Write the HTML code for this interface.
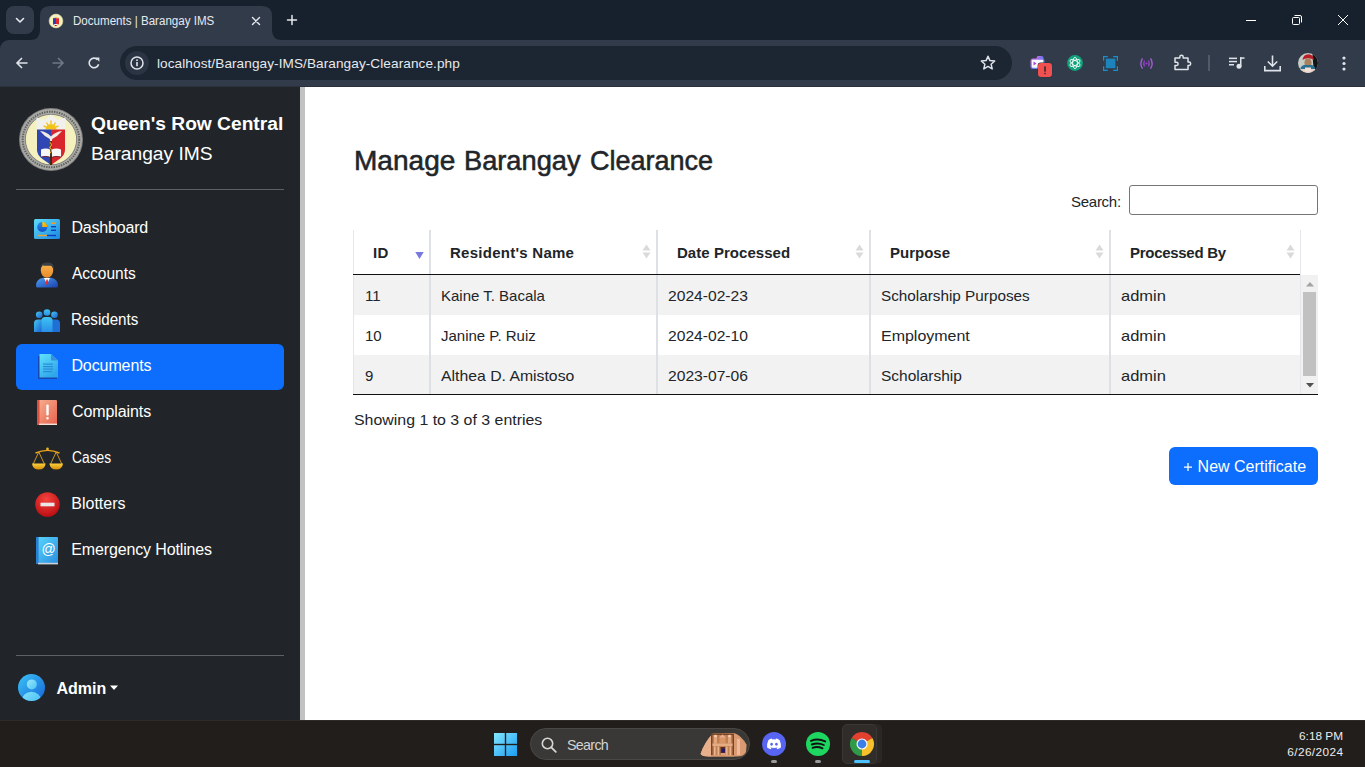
<!DOCTYPE html>
<html><head><meta charset="utf-8"><style>
*{box-sizing:border-box;margin:0;padding:0}
html,body{width:1365px;height:767px;overflow:hidden;background:#fff;font-family:"Liberation Sans",sans-serif}
body{position:relative}
.a{position:absolute}
.t{position:absolute;line-height:1;white-space:nowrap}
svg{position:absolute;overflow:visible}
</style></head><body>
<div class="a" style="left:0;top:0;width:1365px;height:52px;background:#17212e"></div>
<div class="a" style="left:6px;top:6px;width:28px;height:28px;border-radius:8px;background:#323b4a"></div>
<svg style="left:14px;top:14px" width="12" height="12" viewBox="0 0 12 12"><path d="M2.5 4.5 L6 8 L9.5 4.5" fill="none" stroke="#e6e9ee" stroke-width="1.6" stroke-linecap="round" stroke-linejoin="round"/></svg>
<svg style="left:30px;top:6px" width="252" height="34" viewBox="0 0 252 34"><path d="M0 34 Q10 34 10 24 L10 10 Q10 0 20 0 L232 0 Q242 0 242 10 L242 24 Q242 34 252 34 Z" fill="#323b4a"/></svg>
<svg style="left:49px;top:13.5px" width="14" height="14" viewBox="0 0 14 14"><circle cx="7" cy="7" r="6.9" fill="#f7f3bd"/><circle cx="7" cy="7" r="6.9" fill="none" stroke="#d8d4a0" stroke-width="0.6"/><rect x="4.3" y="2.3" width="5.4" height="1.8" fill="#e8e8e0"/><rect x="5.8" y="3.2" width="2.4" height="1" fill="#f0c020"/><path d="M4 4.2 L10 4.2 L10 10 L7 12.3 L4 10 Z" fill="#de2a2a"/><path d="M4 4.2 L7 4.2 L7 12.3 L4 10 Z" fill="#2a40b8"/><path d="M5.2 10 L8.8 10 L8.8 11 L5.2 11 Z" fill="#f4f4f4"/></svg>
<div class="t" style="left:72.5px;top:15.19px;font-size:12.3px;font-weight:normal;color:#e6e9ee;transform:scaleX(0.941);transform-origin:0 0;">Documents | Barangay IMS</div>
<svg style="left:252px;top:16.5px" width="8" height="8" viewBox="0 0 8 8"><path d="M0.5 0.5 L7.5 7.5 M7.5 0.5 L0.5 7.5" stroke="#e6e9ee" stroke-width="1.4" stroke-linecap="round"/></svg>
<svg style="left:287px;top:15px" width="10" height="10" viewBox="0 0 10 10"><path d="M5 0.5 V9.5 M0.5 5 H9.5" stroke="#e6e9ee" stroke-width="1.5" stroke-linecap="round"/></svg>
<div class="a" style="left:1246px;top:20px;width:10px;height:1px;background:#fff"></div>
<svg style="left:1292px;top:15px" width="10" height="10" viewBox="0 0 10 10"><rect x="0.5" y="2.5" width="7" height="7" rx="1" fill="none" stroke="#fff" stroke-width="1"/><path d="M2.5 0.5 H8 Q9.5 0.5 9.5 2 V7.5" fill="none" stroke="#fff" stroke-width="1"/></svg>
<svg style="left:1338px;top:15px" width="10" height="10" viewBox="0 0 10 10"><path d="M0 0 L10 10 M10 0 L0 10" stroke="#fff" stroke-width="1"/></svg>
<div class="a" style="left:0;top:40px;width:1365px;height:47px;background:#323b4a;border-top-left-radius:9px"></div>
<div class="a" style="left:0;top:86px;width:1365px;height:1px;background:#2a313d"></div>
<svg style="left:16px;top:57px" width="12" height="12" viewBox="0 0 12 12"><path d="M11.5 6 H1 M6 1 L1 6 L6 11" fill="none" stroke="#dfe3ea" stroke-width="1.6"/></svg>
<svg style="left:52px;top:57px" width="12" height="12" viewBox="0 0 12 12"><path d="M0.5 6 H11 M6 1 L11 6 L6 11" fill="none" stroke="#6f7886" stroke-width="1.6"/></svg>
<svg style="left:88px;top:57px" width="12" height="12" viewBox="0 0 12 12"><path d="M10.6 7.2 A4.8 4.8 0 1 1 9.4 2.6" fill="none" stroke="#dfe3ea" stroke-width="1.6"/><path d="M7.2 0.6 L11.4 0.6 L11.4 4.8 Z" fill="#dfe3ea"/></svg>
<div class="a" style="left:120px;top:46px;width:892px;height:34px;border-radius:17px;background:#1c2532"></div>
<div class="a" style="left:125px;top:51px;width:24px;height:24px;border-radius:12px;background:#2b3442"></div>
<svg style="left:130px;top:56px" width="14" height="14" viewBox="0 0 14 14"><circle cx="7" cy="7" r="6" fill="none" stroke="#dfe3ea" stroke-width="1.5"/><rect x="6.2" y="6" width="1.6" height="4.2" fill="#dfe3ea"/><rect x="6.2" y="3.4" width="1.6" height="1.6" fill="#dfe3ea"/></svg>
<div class="t" style="left:157px;top:56.89px;font-size:13.6px;font-weight:normal;color:#e6e9ee;letter-spacing:0.08px;">localhost/Barangay-IMS/Barangay-Clearance.php</div>
<svg style="left:980px;top:55px" width="16" height="16" viewBox="0 0 16 16"><path d="M8 1.2 L9.9 5.6 L14.7 6 L11.1 9.2 L12.2 13.9 L8 11.4 L3.8 13.9 L4.9 9.2 L1.3 6 L6.1 5.6 Z" fill="none" stroke="#dfe3ea" stroke-width="1.5" stroke-linejoin="round"/></svg>
<!-- ext1 screen recorder -->
<svg style="left:1030px;top:55px" width="23" height="23" viewBox="0 0 23 23">
<defs><linearGradient id="gE1" x1="0" y1="0" x2="1" y2="1"><stop offset="0" stop-color="#e070e0"/><stop offset="0.5" stop-color="#7a70f0"/><stop offset="1" stop-color="#30c0f0"/></linearGradient></defs>
<rect x="6.5" y="1" width="7" height="4.5" rx="2" fill="url(#gE1)"/>
<rect x="0.5" y="3.5" width="14" height="10.5" rx="2.5" fill="url(#gE1)"/>
<rect x="1.8" y="4.8" width="11.4" height="8" rx="1" fill="#f8f8ff"/>
<path d="M3.5 6.5 L6.5 8.5 L3.5 10.5 Z" fill="#b040e0"/>
<rect x="7.6" y="7.6" width="14.8" height="14.8" rx="3.2" fill="#2a3342"/>
<rect x="8" y="8" width="14" height="14" rx="3" fill="#f05050"/>
<rect x="14.3" y="11.3" width="1.4" height="5.4" rx="0.4" fill="#222"/>
<rect x="14.3" y="17.8" width="1.4" height="1.4" rx="0.4" fill="#222"/>
</svg>
<!-- chatgpt -->
<svg style="left:1066.5px;top:55px" width="16" height="16" viewBox="0 0 16 16">
<circle cx="8" cy="8" r="7.9" fill="#12a37c"/>
<g fill="none" stroke="#fff" stroke-width="0.85">
<ellipse cx="8" cy="8" rx="2.4" ry="5.6"/>
<ellipse cx="8" cy="8" rx="2.4" ry="5.6" transform="rotate(60 8 8)"/>
<ellipse cx="8" cy="8" rx="2.4" ry="5.6" transform="rotate(120 8 8)"/>
</g>
</svg>
<!-- blue capture -->
<svg style="left:1102.5px;top:55.5px" width="15" height="15" viewBox="0 0 15 15">
<path d="M0.6 4.8 V0.6 H4.8 M10.2 0.6 H14.4 V4.8 M14.4 10.2 V14.4 H10.2 M4.8 14.4 H0.6 V10.2" fill="none" stroke="#1a8fcf" stroke-width="1.2"/>
<rect x="2.8" y="2.6" width="9.6" height="9.6" fill="#1c84ba"/>
</svg>
<!-- purple broadcast -->
<svg style="left:1138.5px;top:57.5px" width="15" height="11" viewBox="0 0 15 11">
<path d="M3.2 0.8 Q0.6 5.5 3.2 10.2 M11.8 0.8 Q14.4 5.5 11.8 10.2" fill="none" stroke="#a35bd6" stroke-width="1.4" stroke-linecap="round"/>
<path d="M5.3 3 Q4.2 5.5 5.3 8 M9.7 3 Q10.8 5.5 9.7 8" fill="none" stroke="#9a3fd0" stroke-width="1.3" stroke-linecap="round"/>
<circle cx="7.5" cy="5.5" r="1" fill="#9a3fd0"/>
</svg>
<!-- puzzle -->
<svg style="left:1174px;top:54px" width="18" height="17" viewBox="0 0 18 17">
<path d="M1 4 H5.8 V3 A1.7 1.7 0 0 1 9.2 3 V4 H14 V8 H15 A1.7 1.7 0 0 1 15 11.4 H14 V15.6 H1 V11.5 H2.5 A1.6 1.6 0 0 0 2.5 8.3 H1 Z" fill="none" stroke="#dfe3ea" stroke-width="1.5" stroke-linejoin="round"/>
</svg>
<div class="a" style="left:1208px;top:55px;width:1.5px;height:16px;background:#505a69"></div>
<!-- media -->
<svg style="left:1228.5px;top:56.5px" width="16" height="12" viewBox="0 0 16 12">
<rect x="0" y="0.6" width="8" height="1.5" fill="#dfe3ea"/>
<rect x="0" y="3.8" width="8" height="1.5" fill="#dfe3ea"/>
<rect x="0" y="7" width="5" height="1.5" fill="#dfe3ea"/>
<rect x="11" y="0.3" width="1.5" height="9" fill="#dfe3ea"/>
<rect x="11" y="0.3" width="4.5" height="1.5" fill="#dfe3ea"/>
<circle cx="10" cy="9.3" r="2.5" fill="#dfe3ea"/>
</svg>
<!-- download -->
<svg style="left:1263.5px;top:54.5px" width="17" height="17" viewBox="0 0 17 17">
<path d="M8.5 0.5 V11 M3.8 6.5 L8.5 11.2 L13.2 6.5" fill="none" stroke="#dfe3ea" stroke-width="1.6"/>
<path d="M0.8 11 V15.6 H16.2 V11" fill="none" stroke="#dfe3ea" stroke-width="1.6"/>
</svg>
<!-- avatar -->
<svg style="left:1298px;top:53px" width="20" height="20" viewBox="0 0 20 20">
<defs><clipPath id="cPr"><circle cx="10" cy="10" r="10"/></clipPath></defs>
<g clip-path="url(#cPr)">
<rect width="20" height="20" fill="#c6cdc6"/>
<path d="M14.5 0 L20 0 L20 20 L13 20 Q16 14 15 9 Q14.5 4 14.5 0 Z" fill="#121416"/>
<path d="M4.5 7 Q5 1.5 10.5 1.2 Q15.5 1.5 16 7 Q13 5 10 5.2 Q6.5 5.4 4.5 7 Z" fill="#b81e28"/>
<ellipse cx="10" cy="9.8" rx="3.6" ry="4.3" fill="#a8825e"/>
<path d="M2.5 15 Q4 11.5 7 12 L13 12 Q16 11.5 17 14.5 L17 17 L2.5 17 Z" fill="#2a7090"/>
<path d="M2 16 L17 16 L17 20 L2 20 Z" fill="#e6d2c6"/>
<rect x="7" y="14.5" width="6" height="4" fill="#f0e0d8"/>
</g>
</svg>
<!-- menu dots -->
<svg style="left:1342px;top:55.5px" width="4" height="15" viewBox="0 0 4 15">
<circle cx="2" cy="2" r="1.6" fill="#dfe3ea"/><circle cx="2" cy="7.5" r="1.6" fill="#dfe3ea"/><circle cx="2" cy="13" r="1.6" fill="#dfe3ea"/>
</svg>
<div class="a" style="left:0;top:87px;width:300px;height:633px;background:#212529"></div>
<div class="a" style="left:300px;top:87px;width:5px;height:633px;background:#c2c2c2"></div>
<svg style="left:19px;top:107.5px" width="64" height="63" viewBox="0 0 64 63">
<ellipse cx="32" cy="31.5" rx="32" ry="31.5" fill="#808080"/>
<ellipse cx="32" cy="31.5" rx="31" ry="30.5" fill="#a9a9a6"/>
<ellipse cx="32" cy="31.5" rx="28.3" ry="27.8" fill="none" stroke="#60605a" stroke-width="2" stroke-dasharray="1.4 1.1"/>
<ellipse cx="32" cy="31.5" rx="26" ry="25.6" fill="#7a7a76"/>
<ellipse cx="32" cy="31.5" rx="25.2" ry="24.8" fill="#f5f1bf"/>
<path d="M17.5 9.5 L25.5 12 L32 6.5 L38.5 12 L46.5 9.5 L46.5 21.5 L17.5 21.5 Z" fill="#f0f0ec"/>
<path d="M26.5 21.5 A5.5 5.5 0 0 1 37.5 21.5 Z" fill="#f2c418"/>
<path d="M32 12.5 L32 16 M27.5 14.5 L29.2 17.3 M36.5 14.5 L34.8 17.3 M24.5 18 L27.5 19.2 M39.5 18 L36.5 19.2" stroke="#f2c418" stroke-width="1.4"/>
<path d="M18 21.5 L32 21.5 L32 57 L23.5 51 Q18 47 18 42 Z" fill="#3046b3"/>
<path d="M32 21.5 L46 21.5 L46 42 Q46 47 40.5 51 L32 57 Z" fill="#d9262c"/>
<path d="M21 23 Q27.5 23.5 32 28.5 Q36.5 23.5 43 23 Q39 28 33.2 31 L32 38 L30.8 31 Q25 28 21 23 Z" fill="#f2ece4"/>
<path d="M22 41.5 Q27 39.5 32 42 Q37 39.5 42 41.5 L42 49 Q37 47.5 32 49.5 Q27 47.5 22 49 Z" fill="#f7f7f7"/>
<path d="M22 49 Q27 47.5 32 49.5 Q37 47.5 42 49" fill="none" stroke="#6a2030" stroke-width="0.9"/>
<path d="M31.1 33 L32.9 33 L33 57 L31 57 Z" fill="#3a2a10"/>
<path d="M30.8 34.5 Q34 36.5 30.8 39.5 Q34 42 31.2 45" fill="none" stroke="#e8b020" stroke-width="1.2"/>
</svg>
<div class="t" style="left:91px;top:114.15px;font-size:19.2px;font-weight:bold;color:#fff;">Queen's Row Central</div>
<div class="t" style="left:91px;top:144.15px;font-size:19.2px;font-weight:normal;color:#fff;">Barangay IMS</div>
<div class="a" style="left:16px;top:189px;width:268px;height:1px;background:#5d6166"></div>
<div class="a" style="left:16px;top:344px;width:268px;height:46px;border-radius:6px;background:#0d6efd"></div>
<div class="t" style="left:71.4px;top:219.76px;font-size:16px;font-weight:normal;color:#fff;letter-spacing:-0.18px;">Dashboard</div>
<div class="t" style="left:72px;top:265.76px;font-size:16px;font-weight:normal;color:#fff;transform:scaleX(0.969);transform-origin:0 0;">Accounts</div>
<div class="t" style="left:71.4px;top:311.76px;font-size:16px;font-weight:normal;color:#fff;transform:scaleX(0.946);transform-origin:0 0;">Residents</div>
<div class="t" style="left:71.4px;top:357.76px;font-size:16px;font-weight:normal;color:#fff;letter-spacing:-0.09px;">Documents</div>
<div class="t" style="left:72px;top:403.76px;font-size:16px;font-weight:normal;color:#fff;letter-spacing:-0.1px;">Complaints</div>
<div class="t" style="left:72px;top:449.76px;font-size:16px;font-weight:normal;color:#fff;transform:scaleX(0.862);transform-origin:0 0;">Cases</div>
<div class="t" style="left:71.3px;top:495.76px;font-size:16px;font-weight:normal;color:#fff;">Blotters</div>
<div class="t" style="left:71.3px;top:541.76px;font-size:16px;font-weight:normal;color:#fff;letter-spacing:-0.14px;">Emergency Hotlines</div>
<svg style="left:0;top:0" width="1" height="1"><defs>
<linearGradient id="gCard" x1="0" y1="0" x2="1" y2="1"><stop offset="0" stop-color="#5fdcf8"/><stop offset="1" stop-color="#1a86e0"/></linearGradient>
<linearGradient id="gPie" x1="0" y1="0" x2="0" y2="1"><stop offset="0" stop-color="#2a8fe8"/><stop offset="1" stop-color="#1150c8"/></linearGradient>
<linearGradient id="gYel" x1="0" y1="0" x2="1" y2="1"><stop offset="0" stop-color="#ffd400"/><stop offset="1" stop-color="#f59a00"/></linearGradient>
<linearGradient id="gPpl" x1="0" y1="0" x2="1" y2="1"><stop offset="0" stop-color="#45c8f5"/><stop offset="1" stop-color="#1a5fcc"/></linearGradient>
<linearGradient id="gPpl2" x1="0" y1="0" x2="0" y2="1"><stop offset="0" stop-color="#3ec3f3"/><stop offset="1" stop-color="#2a8ee6"/></linearGradient>
<linearGradient id="gDoc" x1="0" y1="0" x2="0.6" y2="1"><stop offset="0" stop-color="#62e2fb"/><stop offset="1" stop-color="#2ea6ea"/></linearGradient>
<linearGradient id="gBook" x1="0" y1="0" x2="1" y2="1"><stop offset="0" stop-color="#f7b08f"/><stop offset="1" stop-color="#e8614e"/></linearGradient>
<linearGradient id="gGold" x1="0" y1="0" x2="0" y2="1"><stop offset="0" stop-color="#fcd23a"/><stop offset="1" stop-color="#d58a0a"/></linearGradient>
<radialGradient id="gRed" cx="0.45" cy="0.3" r="0.75"><stop offset="0" stop-color="#f4443e"/><stop offset="1" stop-color="#b80a10"/></radialGradient>
<linearGradient id="gBlueBook" x1="0" y1="0" x2="1" y2="1"><stop offset="0" stop-color="#5ad6fb"/><stop offset="1" stop-color="#2a8ee0"/></linearGradient>
<linearGradient id="gFace" x1="0" y1="0" x2="0" y2="1"><stop offset="0" stop-color="#f9b650"/><stop offset="1" stop-color="#e98a2a"/></linearGradient>
<linearGradient id="gSuit" x1="0" y1="0" x2="1" y2="1"><stop offset="0" stop-color="#4aa0f0"/><stop offset="1" stop-color="#1b3fae"/></linearGradient>
<linearGradient id="gAv" x1="0" y1="0" x2="1" y2="1"><stop offset="0" stop-color="#3cc4f7"/><stop offset="1" stop-color="#1565d8"/></linearGradient>
</defs></svg>
<!-- Dashboard -->
<svg style="left:34px;top:219px" width="26" height="20" viewBox="0 0 26 20">
<rect x="0" y="0" width="26" height="20" rx="1.5" fill="url(#gCard)"/>
<circle cx="8.3" cy="8" r="5.1" fill="url(#gPie)"/>
<path d="M8.3 8 V2.9 A5.1 5.1 0 0 1 13.4 8 Z" fill="url(#gYel)"/>
<rect x="17" y="3.4" width="5" height="1.6" fill="#f09a20"/>
<rect x="17" y="7" width="5" height="1.4" fill="#0b3cc4"/>
<rect x="17" y="10.6" width="5" height="1.4" fill="#0b3cc4"/>
<rect x="4" y="15.8" width="9" height="1.4" fill="#f0a030"/>
<rect x="13" y="15.8" width="9" height="1.4" fill="#0b3cc4"/>
</svg>
<!-- Accounts -->
<svg style="left:36px;top:262px" width="22" height="26" viewBox="0 0 22 26">
<path d="M0 24 Q0 17 7 15.8 L15 15.8 Q22 17 22 24 Q22 25.5 20 25.5 L2 25.5 Q0 25.5 0 24 Z" fill="url(#gSuit)"/>
<path d="M8 16 L11 22 L14 16 Z" fill="#fff"/>
<path d="M10.3 17.5 L11.7 17.5 L12.2 21.5 L11 23 L9.8 21.5 Z" fill="#e52b2b"/>
<ellipse cx="11" cy="8.5" rx="6.2" ry="7.3" fill="url(#gFace)"/>
<path d="M4.6 7 Q4 1.5 9 0.8 Q14 0 16.5 2 Q18.2 3.6 17.3 7.5 Q16.8 4 14 3.8 Q9 4 6.3 3.6 Q5 4.2 4.6 7 Z" fill="#3a4048"/>
</svg>
<!-- Residents -->
<svg style="left:34px;top:309px" width="26" height="23" viewBox="0 0 26 23">
<circle cx="5.2" cy="5.8" r="3.3" fill="url(#gPpl)"/>
<circle cx="20.5" cy="5.8" r="3.3" fill="url(#gPpl)"/>
<path d="M0 14.5 Q0 10.5 4 10.5 L8 10.5 L8 23 L0 23 Z" fill="url(#gPpl)"/>
<path d="M18 10.5 L22 10.5 Q26 10.5 26 14.5 L26 23 L18 23 Z" fill="#1e6fd6"/>
<circle cx="13" cy="3.5" r="3.3" fill="url(#gPpl2)"/>
<path d="M7.5 11.5 Q7.5 8 11 8 L15 8 Q18.5 8 18.5 11.5 L18.5 23 L7.5 23 Z" fill="url(#gPpl2)"/>
</svg>
<!-- Documents -->
<svg style="left:37px;top:354px" width="22" height="26" viewBox="0 0 22 26">
<path d="M1 2 L13 2 L20 8.5 L20 25 L1 25 Z" fill="#1a46b0"/>
<path d="M2.5 0 L14 0 L21 6.5 L21 23.5 L2.5 23.5 Z" fill="url(#gDoc)"/>
<path d="M14 0 L14 6.5 L21 6.5 Z" fill="#3a8ee0"/>
<rect x="6" y="9.5" width="10" height="1.2" fill="#2b8ad8"/>
<rect x="6" y="12" width="10" height="1.2" fill="#2b8ad8"/>
<rect x="6" y="14.5" width="10" height="1.2" fill="#2b8ad8"/>
<rect x="6" y="17" width="9" height="1.2" fill="#2b8ad8"/>
</svg>
<!-- Complaints -->
<svg style="left:37px;top:400px" width="20" height="26" viewBox="0 0 20 26">
<rect x="0" y="0" width="20" height="25" rx="1" fill="url(#gBook)"/>
<rect x="0" y="0" width="2.5" height="25" fill="#d9503e"/>
<rect x="2" y="23.6" width="18" height="1.4" fill="#f2e2d6"/>
<rect x="9.3" y="4.5" width="2.4" height="11" rx="1" fill="#fff"/>
<rect x="9.3" y="17" width="2.4" height="2.4" rx="1" fill="#fff"/>
</svg>
<!-- Cases -->
<svg style="left:31.5px;top:447px" width="31" height="24" viewBox="0 0 31 24">
<path d="M3.5 6 Q15.5 0.8 27.5 6" fill="none" stroke="#e8a21a" stroke-width="1.4"/>
<circle cx="15.5" cy="2" r="1.4" fill="#f0b020"/>
<path d="M6.8 5 L1.2 17 M6.8 5 L12.4 17 M24.2 5 L18.6 17 M24.2 5 L29.8 17" fill="none" stroke="#e0a020" stroke-width="0.9"/>
<path d="M0 16.5 L13.6 16.5 Q13 22.5 6.8 22.5 Q0.6 22.5 0 16.5 Z M17.4 16.5 L31 16.5 Q30.4 22.5 24.2 22.5 Q18 22.5 17.4 16.5 Z" fill="url(#gGold)"/>
</svg>
<!-- Blotters -->
<svg style="left:34.5px;top:492px" width="25" height="25" viewBox="0 0 25 25">
<circle cx="12.5" cy="12.5" r="12.3" fill="url(#gRed)"/>
<rect x="5.5" y="10.7" width="14" height="3.6" fill="#e8e8e8"/>
</svg>
<!-- Emergency -->
<svg style="left:36px;top:537px" width="22" height="28" viewBox="0 0 22 28">
<rect x="0" y="0" width="22" height="27" rx="1" fill="url(#gBlueBook)"/>
<rect x="0" y="0" width="2.6" height="27" fill="#2a7fd0"/>
<rect x="2" y="25.8" width="20" height="1.6" fill="#c9d2da"/>
<text x="12.5" y="17" font-family="Liberation Sans" font-size="14" fill="#fff" text-anchor="middle">@</text>
</svg>
<div class="a" style="left:16px;top:655px;width:268px;height:1px;background:#5d6166"></div>
<svg style="left:18px;top:674px" width="27" height="27" viewBox="0 0 27 27">
<defs><clipPath id="cAv"><circle cx="13.5" cy="13.5" r="13.5"/></clipPath>
<linearGradient id="gAvH" x1="0" y1="0" x2="1" y2="1"><stop offset="0" stop-color="#9ce8fc"/><stop offset="1" stop-color="#4cc4f4"/></linearGradient>
<linearGradient id="gAvB" x1="0" y1="0" x2="1" y2="1"><stop offset="0" stop-color="#86e2fb"/><stop offset="1" stop-color="#36b4f2"/></linearGradient></defs>
<circle cx="13.5" cy="13.5" r="13.5" fill="url(#gAv)"/>
<g clip-path="url(#cAv)"><circle cx="13.8" cy="10.4" r="5" fill="url(#gAvH)"/><ellipse cx="13.5" cy="26.5" rx="9.6" ry="8.8" fill="url(#gAvB)"/></g>
</svg>
<div class="t" style="left:56.5px;top:680.76px;font-size:16px;font-weight:bold;color:#fff;">Admin</div>
<svg style="left:110px;top:685px" width="8" height="6" viewBox="0 0 8 6"><path d="M0 0.5 H8 L4 5 Z" fill="#fff"/></svg>
<div class="t" style="left:353.5px;top:147.02px;font-size:27.5px;font-weight:normal;color:#212529;transform:scaleX(1.02);transform-origin:0 0;-webkit-text-stroke:0.55px #212529">Manage</div>
<div class="t" style="left:464.3px;top:147.02px;font-size:27.5px;font-weight:normal;color:#212529;transform:scaleX(0.99);transform-origin:0 0;-webkit-text-stroke:0.55px #212529">Barangay</div>
<div class="t" style="left:590.2px;top:147.02px;font-size:27.5px;font-weight:normal;color:#212529;transform:scaleX(0.982);transform-origin:0 0;-webkit-text-stroke:0.55px #212529">Clearance</div>
<div class="t" style="left:1071px;top:193.60px;font-size:15px;font-weight:normal;color:#212529;letter-spacing:-0.27px;">Search:</div>
<div class="a" style="left:1129px;top:185px;width:189px;height:30px;border:1px solid #767676;border-radius:3px"></div>
<div class="a" style="left:353px;top:275px;width:947px;height:40px;background:#f2f2f2"></div>
<div class="a" style="left:353px;top:355px;width:947px;height:39px;background:#f2f2f2"></div>
<div class="a" style="left:353px;top:230px;width:1px;height:164px;background:#e3e6ea"></div>
<div class="a" style="left:429px;top:230px;width:2px;height:164px;background:#dde1e6"></div>
<div class="a" style="left:656px;top:230px;width:2px;height:164px;background:#dde1e6"></div>
<div class="a" style="left:869px;top:230px;width:2px;height:164px;background:#dde1e6"></div>
<div class="a" style="left:1109px;top:230px;width:2px;height:164px;background:#dde1e6"></div>
<div class="a" style="left:1300px;top:230px;width:1px;height:164px;background:#e3e6ea"></div>
<div class="a" style="left:353px;top:274px;width:947px;height:1px;background:#111"></div>
<div class="a" style="left:1301px;top:275px;width:17px;height:119px;background:#f1f1f1"></div>
<div class="a" style="left:1303px;top:292px;width:13px;height:84px;background:#c1c1c1"></div>
<svg style="left:1305.5px;top:282px" width="8" height="4.5" viewBox="0 0 8 4.5"><path d="M0 4.5 L4 0 L8 4.5 Z" fill="#a3a3a3"/></svg>
<svg style="left:1305.5px;top:382.5px" width="8" height="4.5" viewBox="0 0 8 4.5"><path d="M0 0 L8 0 L4 4.5 Z" fill="#505050"/></svg>
<div class="a" style="left:353px;top:394px;width:965px;height:1px;background:#111"></div>
<div class="t" style="left:373px;top:245.30px;font-size:15px;font-weight:bold;color:#212529;letter-spacing:0.3px;">ID</div>
<div class="t" style="left:450px;top:245.30px;font-size:15px;font-weight:bold;color:#212529;letter-spacing:0.26px;">Resident's Name</div>
<div class="t" style="left:677px;top:245.30px;font-size:15px;font-weight:bold;color:#212529;letter-spacing:0.04px;">Date Processed</div>
<div class="t" style="left:890px;top:245.30px;font-size:15px;font-weight:bold;color:#212529;">Purpose</div>
<div class="t" style="left:1130px;top:245.30px;font-size:15px;font-weight:bold;color:#212529;letter-spacing:-0.29px;">Processed By</div>
<svg style="left:415px;top:252px" width="9" height="7" viewBox="0 0 9 7"><path d="M0.3 0 L8.7 0 L4.5 7 Z" fill="#7779de"/></svg>
<svg style="left:642px;top:244px" width="9" height="15" viewBox="0 0 9 15"><path d="M0.5 6.5 L4.5 0.5 L8.5 6.5 Z M0.5 8.5 L8.5 8.5 L4.5 14.5 Z" fill="#dadada"/></svg>
<svg style="left:855px;top:244px" width="9" height="15" viewBox="0 0 9 15"><path d="M0.5 6.5 L4.5 0.5 L8.5 6.5 Z M0.5 8.5 L8.5 8.5 L4.5 14.5 Z" fill="#dadada"/></svg>
<svg style="left:1095px;top:244px" width="9" height="15" viewBox="0 0 9 15"><path d="M0.5 6.5 L4.5 0.5 L8.5 6.5 Z M0.5 8.5 L8.5 8.5 L4.5 14.5 Z" fill="#dadada"/></svg>
<svg style="left:1286px;top:244px" width="9" height="15" viewBox="0 0 9 15"><path d="M0.5 6.5 L4.5 0.5 L8.5 6.5 Z M0.5 8.5 L8.5 8.5 L4.5 14.5 Z" fill="#dadada"/></svg>
<div class="t" style="left:365px;top:287.80px;font-size:15px;font-weight:normal;color:#212529;">11</div>
<div class="t" style="left:441px;top:287.80px;font-size:15px;font-weight:normal;color:#212529;">Kaine T. Bacala</div>
<div class="t" style="left:668px;top:287.80px;font-size:15px;font-weight:normal;color:#212529;transform:scaleX(1.042);transform-origin:0 0;">2024-02-23</div>
<div class="t" style="left:881px;top:287.80px;font-size:15px;font-weight:normal;color:#212529;transform:scaleX(1.019);transform-origin:0 0;">Scholarship Purposes</div>
<div class="t" style="left:1121px;top:287.80px;font-size:15px;font-weight:normal;color:#212529;transform:scaleX(1.1);transform-origin:0 0;">admin</div>
<div class="t" style="left:365px;top:328.30px;font-size:15px;font-weight:normal;color:#212529;">10</div>
<div class="t" style="left:441px;top:328.30px;font-size:15px;font-weight:normal;color:#212529;">Janine P. Ruiz</div>
<div class="t" style="left:668px;top:328.30px;font-size:15px;font-weight:normal;color:#212529;transform:scaleX(1.042);transform-origin:0 0;">2024-02-10</div>
<div class="t" style="left:881px;top:328.30px;font-size:15px;font-weight:normal;color:#212529;transform:scaleX(1.065);transform-origin:0 0;">Employment</div>
<div class="t" style="left:1121px;top:328.30px;font-size:15px;font-weight:normal;color:#212529;transform:scaleX(1.1);transform-origin:0 0;">admin</div>
<div class="t" style="left:365px;top:367.80px;font-size:15px;font-weight:normal;color:#212529;">9</div>
<div class="t" style="left:441px;top:367.80px;font-size:15px;font-weight:normal;color:#212529;transform:scaleX(1.052);transform-origin:0 0;">Althea D. Amistoso</div>
<div class="t" style="left:668px;top:367.80px;font-size:15px;font-weight:normal;color:#212529;transform:scaleX(1.042);transform-origin:0 0;">2023-07-06</div>
<div class="t" style="left:881px;top:367.80px;font-size:15px;font-weight:normal;color:#212529;transform:scaleX(1.032);transform-origin:0 0;">Scholarship</div>
<div class="t" style="left:1121px;top:367.80px;font-size:15px;font-weight:normal;color:#212529;transform:scaleX(1.1);transform-origin:0 0;">admin</div>
<div class="t" style="left:353.5px;top:412.10px;font-size:15px;font-weight:normal;color:#212529;transform:scaleX(1.06);transform-origin:0 0;">Showing 1 to 3 of 3 entries</div>
<div class="a" style="left:1169px;top:447px;width:149px;height:38px;border-radius:6px;background:#0d6efd"></div>
<svg style="left:1183.7px;top:463px" width="8" height="8" viewBox="0 0 8 8"><path d="M4 0 V8 M0 4 H8" stroke="#fff" stroke-width="1.25"/></svg>
<div class="t" style="left:1197.6px;top:458.76px;font-size:16px;font-weight:normal;color:#fff;">New Certificate</div>
<div class="a" style="left:0;top:720px;width:1365px;height:47px;background:#221e1c;border-top:1px solid #2f2b29"></div>
<!-- windows logo -->
<svg style="left:494px;top:733px" width="23" height="23" viewBox="0 0 23 23">
<defs><linearGradient id="gWin" gradientUnits="userSpaceOnUse" x1="0" y1="0" x2="23" y2="23"><stop offset="0" stop-color="#84e8fe"/><stop offset="1" stop-color="#1a9cf2"/></linearGradient></defs>
<rect x="0" y="0" width="10.8" height="10.8" fill="url(#gWin)"/>
<rect x="12.2" y="0" width="10.8" height="10.8" fill="url(#gWin)"/>
<rect x="0" y="12.2" width="10.8" height="10.8" fill="url(#gWin)"/>
<rect x="12.2" y="12.2" width="10.8" height="10.8" fill="url(#gWin)"/>
</svg>
<!-- search pill -->
<div class="a" style="left:530px;top:728px;width:220px;height:32px;border-radius:16px;background:#3a3837;border:1px solid #4a4745"></div>
<svg style="left:541px;top:737px" width="16" height="16" viewBox="0 0 16 16">
<circle cx="6.5" cy="6.5" r="5.2" fill="none" stroke="#d6d6d6" stroke-width="1.6"/>
<path d="M10.3 10.3 L14.8 14.8" stroke="#d6d6d6" stroke-width="1.8" stroke-linecap="round"/>
</svg>
<!-- petra -->
<svg style="left:700px;top:731px" width="47" height="27" viewBox="0 0 47 27">
<path d="M0.6 23 Q4 12 12.8 2.5 L34 2 Q42 5 46.6 13.8 L46 21 Q44 25.5 37 25.5 L9 25.5 Q2 25.5 0.6 23 Z" fill="#d99a70"/>
<path d="M0.6 23 Q4 12 12.8 2.5 L12 25.5 L9 25.5 Q2 25.5 0.6 23 Z" fill="#e8b08a"/>
<rect x="37" y="8" width="3" height="16" fill="#f0b8a0"/>
<rect x="11" y="2.5" width="23" height="23" fill="#7a4424"/>
<rect x="12.5" y="4" width="20" height="21" fill="#c07e52"/>
<rect x="14" y="4.5" width="3" height="8" fill="#e2a67c"/>
<rect x="28" y="4.5" width="3" height="8" fill="#e2a67c"/>
<circle cx="15.5" cy="5" r="1.3" fill="#f4d2bc"/>
<circle cx="29.5" cy="5" r="1.3" fill="#f4d2bc"/>
<rect x="19.5" y="6" width="6" height="6.5" fill="#d89668"/>
<path d="M19 6.5 L22.5 3.5 L26 6.5 Z" fill="#e8b090"/>
<rect x="12.5" y="12.5" width="20" height="2.6" fill="#e6ac84"/>
<rect x="14" y="15.5" width="1.6" height="9" fill="#eab48e"/>
<rect x="17.5" y="15.5" width="1.6" height="9" fill="#eab48e"/>
<rect x="26" y="15.5" width="1.6" height="9" fill="#eab48e"/>
<rect x="29.5" y="15.5" width="1.6" height="9" fill="#eab48e"/>
<rect x="20.5" y="16" width="4.5" height="8.5" fill="#5a3018"/>
<rect x="21.8" y="17.5" width="3" height="4" fill="#24186e"/>
<rect x="20.5" y="22" width="5" height="2.5" fill="#dca078"/>
<rect x="11" y="24.3" width="23" height="1.2" fill="#e0a47c"/>
</svg>
<!-- discord -->
<svg style="left:762px;top:732px" width="24" height="24" viewBox="0 0 24 24">
<circle cx="12" cy="12" r="12" fill="#5865f2"/>
<path d="M6.3 8.2 Q8 6.9 10 6.6 L10.4 7.4 Q12 7.1 13.6 7.4 L14 6.6 Q16 6.9 17.7 8.2 Q19.2 11.5 18.9 15.4 Q17.2 16.7 15.3 17.2 L14.5 15.9 Q15.4 15.6 16.1 15.1 Q12 17 7.9 15.1 Q8.6 15.6 9.5 15.9 L8.7 17.2 Q6.8 16.7 5.1 15.4 Q4.8 11.5 6.3 8.2 Z" fill="#fff"/>
<ellipse cx="9.6" cy="12.3" rx="1.3" ry="1.45" fill="#5865f2"/>
<ellipse cx="14.4" cy="12.3" rx="1.3" ry="1.45" fill="#5865f2"/>
</svg>
<div class="a" style="left:771px;top:760px;width:6px;height:3px;border-radius:2px;background:#9a9a9a"></div>
<!-- spotify -->
<svg style="left:806px;top:732px" width="24" height="24" viewBox="0 0 24 24">
<circle cx="12" cy="12" r="12" fill="#1ed760"/>
<path d="M5 8.8 Q12 6 19.2 9.4 M5.8 12.5 Q12 10.2 17.8 13 M6.6 15.8 Q11.5 14 16.5 16.3" fill="none" stroke="#111" stroke-width="1.9" stroke-linecap="round"/>
</svg>
<div class="a" style="left:815px;top:760px;width:6px;height:3px;border-radius:2px;background:#9a9a9a"></div>
<!-- chrome active -->
<div class="a" style="left:846px;top:724px;width:36px;height:40px;border-radius:5px;background:#2a2725"></div>
<div class="a" style="left:842px;top:724px;width:35px;height:40px;border-radius:5px;background:#2f2c2a;border:1px solid #3a3734"></div>
<svg style="left:850px;top:732px" width="24" height="24" viewBox="0 0 24 24">
<path d="M12 12 L1.6 6 A12 12 0 0 1 22.4 6 Z" fill="#e2412f"/>
<path d="M12 12 L22.4 6 A12 12 0 0 1 12 24 Z" fill="#f7c02a"/>
<path d="M12 12 L12 24 A12 12 0 0 1 1.6 6 Z" fill="#2f9a48"/>
<circle cx="12" cy="12" r="5.5" fill="#fff"/>
<circle cx="12" cy="12" r="4.4" fill="#3a7ee8"/>
</svg>
<div class="a" style="left:854px;top:760px;width:16px;height:3px;border-radius:2px;background:#4cc2ff"></div>
<div class="t" style="left:567px;top:737.50px;font-size:14.3px;font-weight:normal;color:#d2d2d2;letter-spacing:-0.7px;">Search</div>
<div class="t" style="right:22px;top:731.01px;font-size:11.8px;font-weight:normal;color:#ececec;">6:18 PM</div>
<div class="t" style="right:21.59999999999991px;top:747.01px;font-size:11.8px;font-weight:normal;color:#ececec;letter-spacing:0.4px;">6/26/2024</div>
</body></html>
